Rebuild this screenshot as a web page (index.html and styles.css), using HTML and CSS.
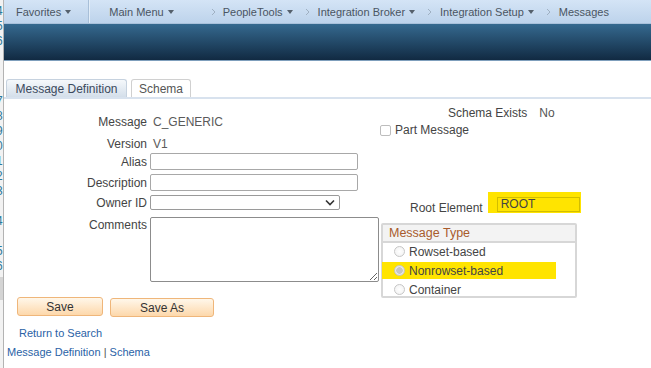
FILE: index.html
```html
<!DOCTYPE html>
<html lang="en">
<head>
    <meta charset="UTF-8">
    <title>Messages</title>
    <link rel="stylesheet" href="styles.css">
</head>
<body>
<div class="page">

    <!-- clipped line numbers of the window behind -->
    <div class="gutter"><div class="gutter-nums">4
5
6



7
8
9
0
1
2
3

4

5
6

(</div></div>

    <div class="main">

        <!-- Top navigation / breadcrumbs -->
        <nav class="topnav">
            <span class="crumb crumb-fav">Favorites<i class="caret"></i></span>
            <span class="nav-divider"></span>
            <span class="crumb crumb-menu">Main Menu<i class="caret"></i></span>
            <svg class="sep sep-first" width="5" height="8" viewBox="0 0 5 8"><polyline points="1,1 4,4 1,7" fill="none" stroke="#9fb0c2" stroke-width="1"/></svg>
            <span class="crumb">PeopleTools<i class="caret"></i></span>
            <svg class="sep" width="5" height="8" viewBox="0 0 5 8"><polyline points="1,1 4,4 1,7" fill="none" stroke="#9fb0c2" stroke-width="1"/></svg>
            <span class="crumb">Integration Broker<i class="caret"></i></span>
            <svg class="sep" width="5" height="8" viewBox="0 0 5 8"><polyline points="1,1 4,4 1,7" fill="none" stroke="#9fb0c2" stroke-width="1"/></svg>
            <span class="crumb">Integration Setup<i class="caret"></i></span>
            <svg class="sep" width="5" height="8" viewBox="0 0 5 8"><polyline points="1,1 4,4 1,7" fill="none" stroke="#9fb0c2" stroke-width="1"/></svg>
            <span class="crumb">Messages</span>
        </nav>

        <div class="banner"></div>

        <!-- Page tabs -->
        <div class="tabs">
            <div class="tab tab-active">Message Definition</div>
            <div class="tab tab-plain">Schema</div>
        </div>

        <div class="form">
            <!-- Left column: main fields -->
            <div class="col-left">
                <div class="field-row row-message">
                    <span class="field-label">Message</span>
                    <span class="field-value">C_GENERIC</span>
                </div>
                <div class="field-row row-version">
                    <span class="field-label">Version</span>
                    <span class="field-value">V1</span>
                </div>
                <div class="field-row row-alias">
                    <span class="field-label">Alias</span>
                    <div class="text-input"></div>
                </div>
                <div class="field-row row-desc">
                    <span class="field-label">Description</span>
                    <div class="text-input"></div>
                </div>
                <div class="field-row row-owner">
                    <span class="field-label">Owner ID</span>
                    <div class="select-box">
                        <svg width="10" height="7" viewBox="0 0 10 7"><polyline points="1,1.5 5,5.5 9,1.5" fill="none" stroke="#333" stroke-width="1.6"/></svg>
                    </div>
                </div>
                <div class="field-row row-comments">
                    <span class="field-label">Comments</span>
                    <textarea class="comments"></textarea>
                </div>

                <div class="buttons">
                    <button class="btn btn-save">Save</button>
                    <button class="btn btn-saveas">Save As</button>
                </div>

                <div class="links">
                    <a class="link return-link" href="#">Return to Search</a>
                    <div class="page-links">
                        <a class="link" href="#">Message Definition</a> <span class="pipe">|</span> <a class="link" href="#">Schema</a>
                    </div>
                </div>
            </div>

            <!-- Right column -->
            <div class="col-right">
                <div class="schema-row">
                    <span class="field-label-plain">Schema Exists</span>
                    <span class="schema-value">No</span>
                </div>
                <div class="check-row">
                    <span class="checkbox"></span>
                    <span>Part Message</span>
                </div>
                <div class="root-row">
                    <span class="root-label">Root Element</span>
                    <div class="highlight root-wrap">
                        <div class="root-input">ROOT</div>
                    </div>
                </div>

                <div class="group-box">
                    <div class="group-head">Message Type</div>
                    <div class="radio-row">
                        <span class="radio"></span>Rowset-based
                    </div>
                    <div class="radio-row highlight selected-row">
                        <span class="radio radio-on"></span>Nonrowset-based
                    </div>
                    <div class="radio-row">
                        <span class="radio"></span>Container
                    </div>
                </div>
            </div>
        </div>
    </div>
</div>
</body>
</html>
```

FILE: styles.css
```css
body {
    margin: 0;
    font-family: "Liberation Sans", Arial, sans-serif;
    font-size: 12px;
    color: #444;
    background: #fff;
    overflow: hidden;
}

.page {
    display: flex;
    width: 651px;
    height: 368px;
}

/* --- left gutter (window behind) --- */
.gutter {
    flex: none;
    width: 3px;
    border-right: 1px solid #b3b3b3;
    overflow: hidden;
    background: linear-gradient(#f2f2f2 0 277px, #d4d4d4 277px 300px, #f2f2f2 300px);
}
.gutter-nums {
    white-space: pre;
    line-height: 15px;
    padding-top: 4px;
    margin-left: -4px;
    color: #2b7a9c;
}

.main {
    flex: 1;
    min-width: 0;
}

/* --- top nav --- */
.topnav {
    height: 24px;
    box-sizing: border-box;
    display: flex;
    align-items: center;
    background: linear-gradient(#d4e4f6, #bdd3eb);
    border-bottom: 1px solid #a9c1db;
    font-size: 11px;
    color: #4a5562;
    white-space: nowrap;
}
.crumb { display: inline-flex; align-items: center; }
.crumb-fav { margin-left: 12px; }
.crumb-menu { margin-left: 20px; }
.caret {
    display: inline-block;
    margin-left: 4px;
    margin-top: 1px;
    border-left: 3.5px solid transparent;
    border-right: 3.5px solid transparent;
    border-top: 4px solid #55606c;
}
.nav-divider {
    align-self: stretch;
    width: 1px;
    margin-left: 17px;
    background: #a8bfd8;
    box-shadow: 1px 0 0 #e2edf8;
}
.sep { margin: 0 8px 0 12px; }
.sep-first { margin-left: 37px; margin-right: 7px; }

.banner {
    height: 37px;
    box-sizing: border-box;
    background: linear-gradient(#35698f, #112a42);
    border-bottom: 1px solid #7f9fbc;
}

/* --- tabs --- */
.tabs {
    display: flex;
    gap: 4px;
    margin-top: 18px;
    padding-left: 2px;
    border-bottom: 2px solid #d8e2ee;
}
.tab {
    height: 18px;
    box-sizing: border-box;
    display: flex;
    align-items: center;
    justify-content: center;
    border: 1px solid #c6d2df;
    border-bottom: none;
    border-radius: 3px 3px 0 0;
}
.tab-active {
    width: 121px;
    background: linear-gradient(#f5f8fb, #d4dfea);
    color: #3b4a5d;
}
.tab-plain {
    width: 60px;
    background: #fff;
    border-color: #d0d0d0;
    color: #555;
}

/* --- form --- */
.form { display: flex; }
.col-left {
    width: 376px;
    flex: none;
    padding-top: 15px;
}
.col-right {
    flex: 1;
    padding-top: 6px;
}

.field-row {
    display: flex;
    align-items: center;
}
.field-label {
    width: 143px;
    margin-right: 3px;
    text-align: right;
    color: #444;
}
.field-value { margin-left: 3px; color: #5a5a5a; }

.row-message { height: 16px; }
.row-version { height: 16px; margin-top: 6px; }
.row-alias { height: 17px; margin-top: 1px; }
.row-desc { height: 17px; margin-top: 4px; }
.row-owner { height: 15px; margin-top: 4px; }
.row-comments { margin-top: 7px; align-items: flex-start; }
.row-comments .field-label { line-height: 16px; }

.text-input {
    width: 208px;
    height: 17px;
    box-sizing: border-box;
    border: 1px solid #a8a8a8;
    border-radius: 2px;
    background: #fff;
}
.select-box {
    width: 190px;
    height: 15px;
    box-sizing: border-box;
    border: 1px solid #9a9a9a;
    border-radius: 2px;
    display: flex;
    align-items: center;
    justify-content: flex-end;
    padding-right: 4px;
}
.comments {
    width: 229px;
    height: 65px;
    box-sizing: border-box;
    margin: 0;
    border: 1px solid #8c8c8c;
    border-radius: 2px;
    font-family: inherit;
}

.buttons {
    display: flex;
    align-items: flex-start;
    gap: 7px;
    margin-top: 15px;
    padding-left: 13px;
}
.btn {
    height: 19px;
    padding: 0;
    border: 1px solid #efb67a;
    border-radius: 3px;
    background: linear-gradient(#fff7ea, #fdd8ab);
    color: #333;
    font-family: inherit;
    font-size: 12px;
}
.btn-save { width: 86px; }
.btn-saveas { width: 104px; margin-top: 1px; }

.links { line-height: 16px; font-size: 11px; }
.link { color: #2a62a6; text-decoration: none; }
.return-link { display: inline-block; margin: 8px 0 0 15px; }
.page-links { margin-top: 3px; padding-left: 3px; }
.pipe { color: #555; }

/* --- right column --- */
.schema-row { height: 16px; display: flex; align-items: center; padding-left: 68px; }
.field-label-plain { color: #444; }
.schema-value { margin-left: 12px; color: #555; }

.check-row {
    height: 16px;
    margin-top: 1px;
    display: flex;
    align-items: center;
    gap: 4px;
    color: #444;
}
.checkbox {
    width: 11px;
    height: 11px;
    box-sizing: border-box;
    border: 1px solid #bdbdbd;
    border-radius: 2px;
    background: #fff;
}

.highlight { background: #ffe400; }

.root-row {
    display: flex;
    align-items: flex-start;
    height: 21px;
    margin-top: 54px;
    padding-left: 30px;
}
.root-label { margin-top: 9px; line-height: 14px; color: #444; }
.root-wrap {
    margin-left: 5px;
    width: 93px;
    height: 21px;
    box-sizing: border-box;
    padding: 5px 1px 1px 9px;
}
.root-input {
    height: 15px;
    box-sizing: border-box;
    border: 1px solid #d2bd00;
    padding-left: 3px;
    line-height: 13px;
    color: #444;
}

.group-box {
    width: 196px;
    height: 75px;
    box-sizing: border-box;
    margin: 10px 0 0 1px;
    border: 2px solid #d7d7d7;
    border-radius: 2px;
}
.group-head {
    height: 18px;
    box-sizing: border-box;
    background: #f3f3f3;
    border-bottom: 2px solid #d7d7d7;
    padding-left: 6px;
    line-height: 16px;
    font-size: 12.5px;
    color: #a85b2c;
}
.radio-row {
    height: 17px;
    margin-top: 2px;
    display: flex;
    align-items: center;
    gap: 4px;
    padding-left: 11px;
    color: #444;
}
.group-head + .radio-row { margin-top: 0; }
.selected-row { width: 174px; box-sizing: border-box; margin-left: -1px; padding-left: 12px; }
.radio {
    width: 11px;
    height: 11px;
    box-sizing: border-box;
    border: 1px solid #c6c6c6;
    border-radius: 50%;
    background: radial-gradient(#fff, #f0f0f0);
}
.radio-on {
    background: radial-gradient(circle, #c4c4c4 0 3px, #e6e6e6 3.5px);
}
```
